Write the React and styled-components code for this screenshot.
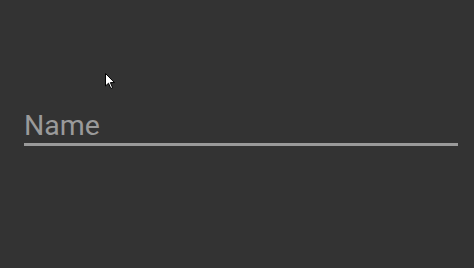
import styled, { createGlobalStyle } from 'styled-components';

const Global = createGlobalStyle`
  html, body {
    margin: 0;
    height: 100%;
    background: #333333;
  }
  #root {
    height: 100%;
  }
`;

const Page = styled.div`
  position: relative;
  height: 268px;
  padding: 106px 16px 0 24px;
  box-sizing: border-box;
  background: #333333;
`;

const Field = styled.label`
  display: flex;
  flex-direction: column;
  width: 434px;
`;

const Input = styled.input`
  background: transparent;
  border: none;
  border-bottom: 3px solid #9a9a9a;
  outline: none;
  padding: 2px 0 1px 0;
  height: 34px;
  font-family: Roboto, 'Noto Sans', sans-serif;
  font-size: 28.5px;
  color: #d0d0d0;

  &::placeholder {
    color: #9a9a9a;
  }
`;

const Cursor = styled.svg`
  position: absolute;
  left: 105px;
  top: 73px;
`;

const App = () => {
  return (
    <>
      <Global />
      <Page>
        <Field>
          <Input placeholder='Name' />
        </Field>
        <Cursor width='12' height='18' viewBox='0 0 12 18'>
          <path d='M0.5 0.5 L0.5 13 L3.5 10.2 L5.8 15.5 L7.6 14.7 L5.4 9.6 L9.5 9.6 Z' fill='#fff' stroke='#000' strokeWidth='1' />
        </Cursor>
      </Page>
    </>
  );
};

export default App;
